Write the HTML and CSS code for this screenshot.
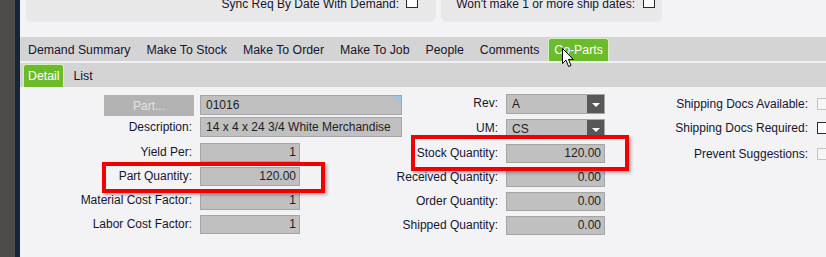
FILE: index.html
```html
<!DOCTYPE html>
<html lang="en">
<head>
  <meta charset="UTF-8">
  <meta name="viewport" content="width=device-width, initial-scale=1.0">
  <title>Co-Parts</title>
  <link rel="stylesheet" href="styles.css">
</head>
<body>
  <div class="screen">
    <div class="rail"></div>
    <div class="edge"></div>
    <div class="main">
      <div class="top">
        <div class="group group-sync">
          <span>Sync Req By Date With Demand:</span>
          <span class="check"></span>
        </div>
        <div class="group group-ship">
          <span>Won't make 1 or more ship dates:</span>
          <span class="check"></span>
        </div>
      </div>

      <div class="tabs">
        <span class="tab">Demand Summary</span>
        <span class="tab">Make To Stock</span>
        <span class="tab">Make To Order</span>
        <span class="tab">Make To Job</span>
        <span class="tab">People</span>
        <span class="tab">Comments</span>
        <span class="tab active">Co-Parts</span>
        <svg class="cursor" width="13" height="20" viewBox="0 0 13 20">
          <path d="M0.5 0.5 L0.5 15.5 L4 12.2 L6.6 18.5 L9 17.5 L6.5 11.4 L11.3 11.4 Z" fill="#fff" stroke="#000" stroke-width="1" stroke-linejoin="miter"/>
        </svg>
      </div>

      <div class="subtabs">
        <span class="tab active">Detail</span>
        <span class="tab">List</span>
      </div>

      <div class="form">
        <div class="col col-part">
          <button class="part-btn">Part...</button>
          <div class="field field-wide corner">01016</div>
          <label>Description:</label>
          <div class="field field-wide">14 x 4 x 24 3/4 White Merchandise</div>
          <label>Yield Per:</label>
          <div class="field num">1</div>
          <label>Part Quantity:</label>
          <div class="field num">120.00</div>
          <label>Material Cost Factor:</label>
          <div class="field num">1</div>
          <label>Labor Cost Factor:</label>
          <div class="field num">1</div>
        </div>

        <div class="col col-qty">
          <label>Rev:</label>
          <div class="field combo">A<span class="drop"></span></div>
          <label>UM:</label>
          <div class="field combo">CS<span class="drop"></span></div>
          <label>Stock Quantity:</label>
          <div class="field num">120.00</div>
          <label>Received Quantity:</label>
          <div class="field num">0.00</div>
          <label>Order Quantity:</label>
          <div class="field num">0.00</div>
          <label>Shipped Quantity:</label>
          <div class="field num">0.00</div>
        </div>

        <div class="col col-flags">
          <label>Shipping Docs Available:</label>
          <span class="check off"></span>
          <label>Shipping Docs Required:</label>
          <span class="check"></span>
          <label>Prevent Suggestions:</label>
          <span class="check off"></span>
        </div>

        <div class="mark mark-part"></div>
        <div class="mark mark-stock"></div>
      </div>
    </div>
  </div>
</body>
</html>
```

FILE: styles.css
```css
body { margin: 0; font-family: "Liberation Sans", Arial, sans-serif; font-size: 12px; color: #15152e; overflow: hidden; }
.screen { display: flex; width: 826px; height: 257px; overflow: hidden; }
.rail { width: 15px; background: #4d4c4a; }
.edge { width: 5px; background: #172636; }
.main { flex: 1; background: #f3f3f6; display: flex; flex-direction: column; min-width: 0; }

.top { height: 37px; display: flex; }
.group { height: 22px; background: #e8e8e8; border-radius: 0 0 6px 6px; display: flex; justify-content: flex-end; align-items: flex-start; gap: 7px; box-sizing: border-box; }
.group span:first-child { line-height: 9px; }
.group .check { margin-top: -4px; }
.group-sync { width: 410px; margin-left: 6px; padding-right: 18px; }
.group-ship { width: 221px; margin-left: 5px; padding-right: 7px; gap: 8px; }

.check { width: 12px; height: 12px; border: 1px solid #2a2a2a; background: #fff; box-sizing: border-box; display: inline-block; }
.check.off { border-color: #c4c4c4; background: #f6f6f6; }

.tabs { height: 24px; background: #d4d4d4; display: flex; border-bottom: 2px solid #f1f1f3; position: relative; font-size: 12.3px; }
.subtabs { height: 24px; background: #d4d4d4; display: flex; font-size: 12.3px; }
.tab { padding: 3px 8px 0; line-height: 21px; white-space: nowrap; }
.tab.active { background: #6bbb2c; color: #fff; border: 1px solid #d4efc0; border-bottom: none; border-radius: 3px 3px 0 0; margin-top: 1px; line-height: 19px; padding: 2px 5px 0; }
.tabs .tab.active { margin-left: 1px; }
.subtabs .tab.active { margin-left: 3px; padding: 2px 4px 0; }
.subtabs .tab:last-child { padding-left: 9px; }
.cursor { position: absolute; left: 542px; top: 11px; }

.form { flex: 1; display: flex; position: relative; }
.col { display: grid; column-gap: 8px; align-items: start; justify-items: start; }
.col-part { width: 382px; grid-template-columns: 172px 202px; grid-template-rows: 22px 26px 24px 24px 24px 24px; padding-top: 8px; }
.col-qty { width: 203px; grid-template-columns: 96px 99px; grid-template-rows: 25px 25px 24px 24px 24px 24px; padding-top: 7px; }
.col-flags { grid-template-columns: 203px 13px; column-gap: 9px; grid-template-rows: 24px 24px 28px; padding-top: 5px; align-items: center; }

label { justify-self: end; text-align: right; line-height: 19px; white-space: nowrap; }
.col-part label:nth-of-type(1) { line-height: 20px; }
.col-flags label { line-height: 14px; }

.field { width: 100%; height: 19px; background: #c0c0c0; border: 1px solid #a5a5a5; box-sizing: border-box; padding: 0 5px; line-height: 17px; color: #1e1e1e; white-space: nowrap; overflow: hidden; position: relative; }
.col-part .num { width: 100px; }
.field-wide { height: 20px; line-height: 18px; }
.num { text-align: right; padding-right: 3px; }
.corner::after { content: ""; position: absolute; right: 0; top: 0; border-top: 9px solid #a8c2e2; border-left: 9px solid transparent; }

.part-btn { justify-self: end; margin-right: -2px; width: 90px; height: 21px; background: #b3b3b3; border: none; color: #e4e4e4; font: inherit; padding: 0; }

.combo { height: 20px; line-height: 18px; }
.drop { position: absolute; right: 0; top: 0; width: 17px; height: 18px; background: #575757; }
.drop::after { content: ""; position: absolute; left: 5px; top: 8px; border-top: 4px solid #fff; border-left: 4px solid transparent; border-right: 4px solid transparent; }

.mark { position: absolute; border: 4px solid #f00000; box-sizing: border-box; box-shadow: 2px 2px 3px rgba(0, 0, 0, 0.3); }
.mark-part { left: 82px; top: 75px; width: 223px; height: 31px; }
.mark-stock { left: 391px; top: 48px; width: 218px; height: 36px; }
```
